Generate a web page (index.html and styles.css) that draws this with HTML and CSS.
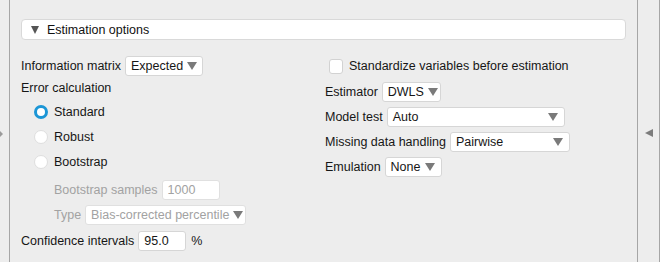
FILE: index.html
```html
<!DOCTYPE html>
<html lang="en">
<head>
    <meta charset="UTF-8">
    <title>Estimation options</title>
    <link rel="stylesheet" href="styles.css">
</head>
<body>
    <div class="window">
        <!-- left collapse strip -->
        <div class="edge-left"><span class="edge-arrow"></span></div>

        <div class="panel">
            <div class="section-head">
                <span class="caret"></span>
                <span>Estimation options</span>
            </div>

            <div class="options">
                <!-- left column -->
                <div class="col">
                    <div class="row">
                        <span>Information matrix</span>
                        <div class="select w-info"><span>Expected</span><span class="tri"></span></div>
                    </div>

                    <div class="group-label">Error calculation</div>

                    <div class="radios">
                        <div class="radio-row"><span class="radio checked"></span>Standard</div>
                        <div class="radio-row"><span class="radio"></span>Robust</div>
                        <div class="radio-row"><span class="radio"></span>Bootstrap</div>
                    </div>

                    <div class="row indent disabled r-samples">
                        <span>Bootstrap samples</span>
                        <div class="field w-samples">1000</div>
                    </div>
                    <div class="row indent disabled r-type">
                        <span>Type</span>
                        <div class="select w-type"><span>Bias-corrected percentile</span><span class="tri"></span></div>
                    </div>
                    <div class="row r-ci">
                        <span>Confidence intervals</span>
                        <div class="field w-ci">95.0</div>
                        <span class="unit">%</span>
                    </div>
                </div>

                <!-- right column -->
                <div class="col">
                    <div class="row check-row">
                        <span class="checkbox"></span>
                        <span>Standardize variables before estimation</span>
                    </div>
                    <div class="row r-first">
                        <span>Estimator</span>
                        <div class="select w-est"><span>DWLS</span><span class="tri"></span></div>
                    </div>
                    <div class="row r-next">
                        <span>Model test</span>
                        <div class="select w-test"><span>Auto</span><span class="tri"></span></div>
                    </div>
                    <div class="row r-next">
                        <span>Missing data handling</span>
                        <div class="select w-missing"><span>Pairwise</span><span class="tri"></span></div>
                    </div>
                    <div class="row r-next">
                        <span>Emulation</span>
                        <div class="select w-emu"><span>None</span><span class="tri"></span></div>
                    </div>
                </div>
            </div>
        </div>

        <!-- right collapse strip -->
        <div class="edge-right"><span class="collapse-arrow"></span></div>
    </div>
</body>
</html>
```

FILE: styles.css
```css
* {
    margin: 0;
    padding: 0;
    box-sizing: border-box;
}

body {
    font-family: 'Liberation Sans', Arial, sans-serif;
    font-size: 12.5px;
    color: #161616;
    background-color: #ededed;
    white-space: nowrap;
    overflow: hidden;
}

.window {
    display: flex;
    height: 262px;
}

/* side strips */
.edge-left {
    width: 10px;
    border-right: 1px solid #a6a6a6;
    display: flex;
    align-items: center;
    padding-top: 6px;
}

.edge-arrow {
    width: 0;
    height: 0;
    border-top: 3px solid transparent;
    border-bottom: 3px solid transparent;
    border-left: 3px solid #9a9a9a;
}

.edge-right {
    width: 23px;
    border-left: 1px solid #a6a6a6;
    border-right: 1px solid #a6a6a6;
    display: flex;
    justify-content: center;
    align-items: center;
    padding-top: 3px;
}

.collapse-arrow {
    width: 0;
    height: 0;
    border-top: 4.5px solid transparent;
    border-bottom: 4.5px solid transparent;
    border-right: 8px solid #7c7c7c;
}

/* main panel */
.panel {
    flex: 1;
    padding: 19px 11px 0 11px;
}

.section-head {
    height: 21px;
    background-color: #ffffff;
    border: 1px solid #d9d9d9;
    border-radius: 4px;
    display: flex;
    align-items: center;
    gap: 8px;
    padding-left: 9px;
    color: #111;
}

.caret {
    width: 0;
    height: 0;
    border-left: 4.5px solid transparent;
    border-right: 4.5px solid transparent;
    border-top: 8px solid #555;
}

.options {
    display: grid;
    grid-template-columns: 304px 1fr;
    margin-top: 16px;
}

.col {
    display: flex;
    flex-direction: column;
}

.row {
    display: flex;
    align-items: center;
    gap: 4px;
    height: 20px;
}

.indent {
    padding-left: 33px;
}

.disabled {
    color: #a2a2a2;
}

.group-label {
    margin-top: 4px;
    height: 16px;
    line-height: 16px;
}

/* radios */
.radios {
    margin-top: 3px;
    display: flex;
    flex-direction: column;
}

.radio-row {
    display: flex;
    align-items: center;
    gap: 6px;
    height: 25px;
    padding-left: 13px;
}

.radio {
    width: 14px;
    height: 14px;
    border-radius: 50%;
    background-color: #ffffff;
    border: 1px solid #dedede;
}

.radio.checked {
    border: 3px solid #1c96d6;
}

/* checkbox */
.check-row {
    padding-left: 4px;
    gap: 6px;
}

.checkbox {
    width: 14px;
    height: 15px;
    border-radius: 3px;
    background-color: #ffffff;
    border: 1px solid #d2d2d2;
}

/* inputs and dropdowns */
.select,
.field {
    flex-shrink: 0;
    height: 20px;
    background-color: #ffffff;
    border: 1px solid #d6d6d6;
    border-radius: 3px;
    display: flex;
    align-items: center;
    padding-left: 5px;
    overflow: hidden;
}

.select {
    justify-content: space-between;
    gap: 4px;
    padding-right: 6px;
}

.disabled .select,
.disabled .field {
    border-color: #e0e0e0;
}

.tri {
    flex-shrink: 0;
    width: 0;
    height: 0;
    border-left: 5px solid transparent;
    border-right: 5px solid transparent;
    border-top: 8px solid #7a7a7a;
}

.unit {
    margin-left: 1px;
}

.w-info { width: 78px; }
.w-samples { width: 58px; }
.w-type { width: 161px; }
.w-ci { width: 48px; }
.w-est { width: 59px; }
.w-test { width: 178px; }
.w-missing { width: 120px; }
.w-emu { width: 57px; }

.r-samples { margin-top: 6px; }
.r-type { margin-top: 5px; }
.r-ci { margin-top: 6px; }
.r-first { margin-top: 6px; }
.r-next { margin-top: 5px; }
```
